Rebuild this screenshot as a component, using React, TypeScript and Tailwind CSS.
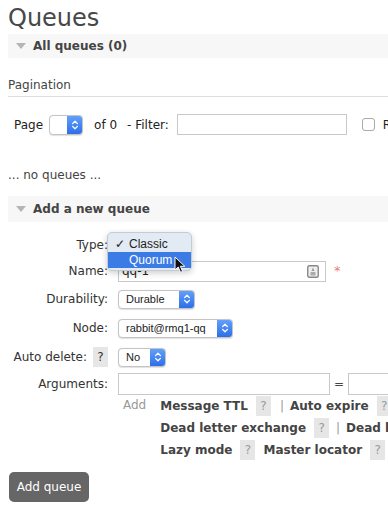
import React from "react";

function Chev() {
  return (
    <svg width="8" height="12" viewBox="0 0 8 12" fill="none">
      <path d="M1.6 4.6 L4 2.2 L6.4 4.6" stroke="white" strokeWidth="1.3" strokeLinecap="round" strokeLinejoin="round" />
      <path d="M1.6 7.4 L4 9.8 L6.4 7.4" stroke="white" strokeWidth="1.3" strokeLinecap="round" strokeLinejoin="round" />
    </svg>
  );
}

function Sel({ className, text }: { className: string; text: string }) {
  return (
    <div className={"flex items-stretch rounded-[4px] border border-[#c4c4c4] bg-white shadow-[0_0.5px_1px_rgba(0,0,0,0.12)] " + className}>
      <div className="flex flex-1 items-center pl-[7px] font-['Liberation_Sans',Arial,sans-serif] text-[11px] text-[#222]">{text}</div>
      <div className="flex w-[15px] items-center justify-center rounded-r-[3px] bg-gradient-to-b from-[#62a0fa] to-[#2d6ee8]">
        <Chev />
      </div>
    </div>
  );
}

function Q({ dark }: { dark?: boolean }) {
  return (
    <span className={"inline-flex h-[20px] w-[15px] items-center justify-center bg-[#e6e6e6] text-[12px] font-normal " + (dark ? "text-[#333]" : "text-[#999]")}>?</span>
  );
}

function Row({ label, children, extra, h }: { label: string; children?: React.ReactNode; extra?: React.ReactNode; h: string }) {
  return (
    <div className={"flex items-center " + h}>
      <div className="flex w-[108px] items-center justify-end gap-[6px] text-[12px] text-[#333]">
        <span>{label}</span>
        {extra}
      </div>
      <div className="ml-[10px] flex items-center">{children}</div>
    </div>
  );
}

export default function App() {
  return (
    <div className="relative h-[512px] w-[388px] overflow-hidden whitespace-nowrap bg-white font-['DejaVu_Sans',Verdana,sans-serif] text-[#444]">
      <div className="w-[560px]">
        <h1 className="ml-[8px] pt-[3px] text-[24px] leading-[30px] text-[#484848]">Queues</h1>
        <div className="ml-[8px] mt-[1px] flex h-[24px] items-center bg-[#f7f7f7]">
          <svg width="10" height="8" viewBox="0 0 10 8" className="ml-[8px]">
            <path d="M0 1 L10 1 L5 7 Z" fill="#b5b5b5" />
          </svg>
          <span className="ml-[7px] text-[12px] font-bold text-[#444]">All queues (0)</span>
        </div>

        <div className="ml-[8px] mt-[20px] border-b border-[#dedede] pb-[3px] text-[12px] leading-[15px] text-[#444]">Pagination</div>

        <div className="ml-[14px] mt-[17px] flex items-center text-[12px] text-[#222]">
          <span>Page</span>
          <Sel className="ml-[6px] h-[20px] w-[34px]" text="" />
          <span className="ml-[11px]">of 0</span>
          <span className="ml-[10px]">- Filter:</span>
          <div className="ml-[8px] h-[21px] w-[170px] border border-[#c8c8c8] bg-white" />
          <div className="ml-[15px] h-[13px] w-[13px] rounded-[3px] border border-[#aaa] bg-white" />
          <span className="ml-[8px]">Regex</span>
        </div>

        <div className="ml-[8px] mt-[33px] text-[12px] leading-[15px] text-[#444]">... no queues ...</div>

        <div className="ml-[8px] mt-[13px] flex h-[26px] items-center bg-[#f7f7f7]">
          <svg width="10" height="8" viewBox="0 0 10 8" className="ml-[8px]">
            <path d="M0 1 L10 1 L5 7 Z" fill="#b5b5b5" />
          </svg>
          <span className="ml-[7px] text-[12px] font-bold text-[#444]">Add a new queue</span>
        </div>

        <div className="mt-[10px] flex flex-col">
          <Row label="Type:" h="h-[26px]">
            <div className="invisible">
              <Sel className="h-[19px] w-[70px]" text="Classic" />
            </div>
          </Row>
          <Row label="Name:" h="h-[26px]">
            <div className="relative flex h-[21px] w-[208px] items-center border border-[#c8c8c8] bg-white pl-[3px] text-[12px] text-[#222]">
              qq-1
              <svg width="12" height="13" viewBox="0 0 12 13" className="absolute right-[6px] top-[3px]">
                <rect x="0.75" y="0.75" width="10.5" height="11.5" rx="1.5" fill="#eee" stroke="#888" strokeWidth="1.4" />
                <path d="M6 2.5 L7.5 6 L4.5 6 Z" fill="#999" />
                <rect x="3.5" y="7" width="5" height="3.5" fill="#aaa" />
              </svg>
            </div>
            <span className="ml-[8px] text-[13px] text-[#f07a7a]">*</span>
          </Row>
          <Row label="Durability:" h="h-[30px]">
            <Sel className="h-[19px] w-[77px]" text="Durable" />
          </Row>
          <Row label="Node:" h="h-[28px]">
            <Sel className="h-[19px] w-[115px]" text="rabbit@rmq1-qq" />
          </Row>
          <Row label="Auto delete:" extra={<Q dark />} h="h-[30px]">
            <Sel className="h-[19px] w-[48px]" text="No" />
          </Row>
          <Row label="Arguments:" h="h-[24px]">
            <div className="h-[22px] w-[212px] border border-[#c8c8c8] bg-white" />
            <span className="ml-[4px] text-[12px] text-[#444]">=</span>
            <div className="ml-[4px] h-[22px] w-[120px] border border-[#c8c8c8] bg-white" />
          </Row>
        </div>

        <div className="flex">
          <div className="ml-[123px] pt-[1px] text-[12px] leading-[16px] text-[#999]">Add</div>
          <div className="ml-[14px] flex flex-col gap-[2px] text-[12px] font-bold text-[#444]">
            <div className="flex items-center">
              <span>Message TTL</span>
              <span className="ml-[8px]"><Q /></span>
              <span className="ml-[9px] font-normal text-[#999]">|</span>
              <span className="ml-[6px]">Auto expire</span>
              <span className="ml-[8px]"><Q /></span>
            </div>
            <div className="flex items-center">
              <span>Dead letter exchange</span>
              <span className="ml-[8px]"><Q /></span>
              <span className="ml-[7px] font-normal text-[#999]">|</span>
              <span className="ml-[6px]">Dead letter routing key</span>
            </div>
            <div className="flex items-center">
              <span>Lazy mode</span>
              <span className="ml-[8px]"><Q /></span>
              <span className="ml-[8px]">Master locator</span>
              <span className="ml-[8px]"><Q /></span>
            </div>
          </div>
        </div>

        <button className="ml-[9px] mt-[12px] flex h-[30px] w-[80px] items-center justify-center rounded-[5px] bg-[#666] text-[12px] text-white">
          Add queue
        </button>
      </div>

      <div className="absolute left-[107px] top-[232px] w-[85px] rounded-[5px] border border-[#c3cbd4] bg-[#e2eaf3] pb-[2px] pt-[3px] shadow-[0_2px_6px_rgba(0,0,0,0.2)] font-['Liberation_Sans',Arial,sans-serif]">
        <div className="flex h-[16px] items-center text-[12px] text-[#222]">
          <span className="ml-[7px] w-[14px]">✓</span>
          <span>Classic</span>
        </div>
        <div className="flex h-[16px] items-center bg-[#3a7be6] text-[12px] text-white">
          <span className="ml-[7px] w-[14px]"></span>
          <span>Quorum</span>
        </div>
      </div>

      <svg className="absolute left-[174px] top-[256px]" width="14" height="18" viewBox="0 0 14 18">
        <path d="M1 1 L1 14 L4.2 11 L6.5 16.3 L8.6 15.4 L6.4 10.3 L10.8 10.3 Z" fill="#111" stroke="white" strokeWidth="1" strokeLinejoin="round" />
      </svg>
    </div>
  );
}
